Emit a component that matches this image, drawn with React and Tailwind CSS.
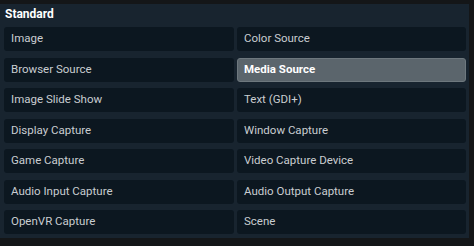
const sources = [
    ["Image", "Color Source"],
    ["Browser Source", "Media Source"],
    ["Image Slide Show", "Text (GDI+)"],
    ["Display Capture", "Window Capture"],
    ["Game Capture", "Video Capture Device"],
    ["Audio Input Capture", "Audio Output Capture"],
    ["OpenVR Capture", "Scene"],
]

function App() {
    const selected = "Media Source"

    return (
        <div className="w-[474px] h-[246px] bg-[#141618] pt-[4px] font-['Roboto',sans-serif] overflow-hidden">
            <section className="w-[469px] h-[234px] bg-[#18242f] pl-[4px] pr-[3px]">
                <h2 className="text-white text-[12px] font-bold leading-none pt-[4px] pl-[1px] h-[23px]">Standard</h2>
                <div className="grid grid-cols-[230px_229px] gap-x-[3px] gap-y-[6.5px]">
                    {sources.flat().map((name) => (
                        <div
                            key={name}
                            className={name === selected
                                ? "h-[24px] flex items-center pl-[6px] rounded-[3px] bg-[#5b656c] border border-[#6e787e] text-white font-bold text-[11.5px]"
                                : "h-[24px] flex items-center pl-[7px] rounded-[3px] bg-[#0c1720] text-[#c9cdd1] text-[11.5px]"}
                        >
                            {name}
                        </div>
                    ))}
                </div>
            </section>
        </div>
    )
}

export default App
